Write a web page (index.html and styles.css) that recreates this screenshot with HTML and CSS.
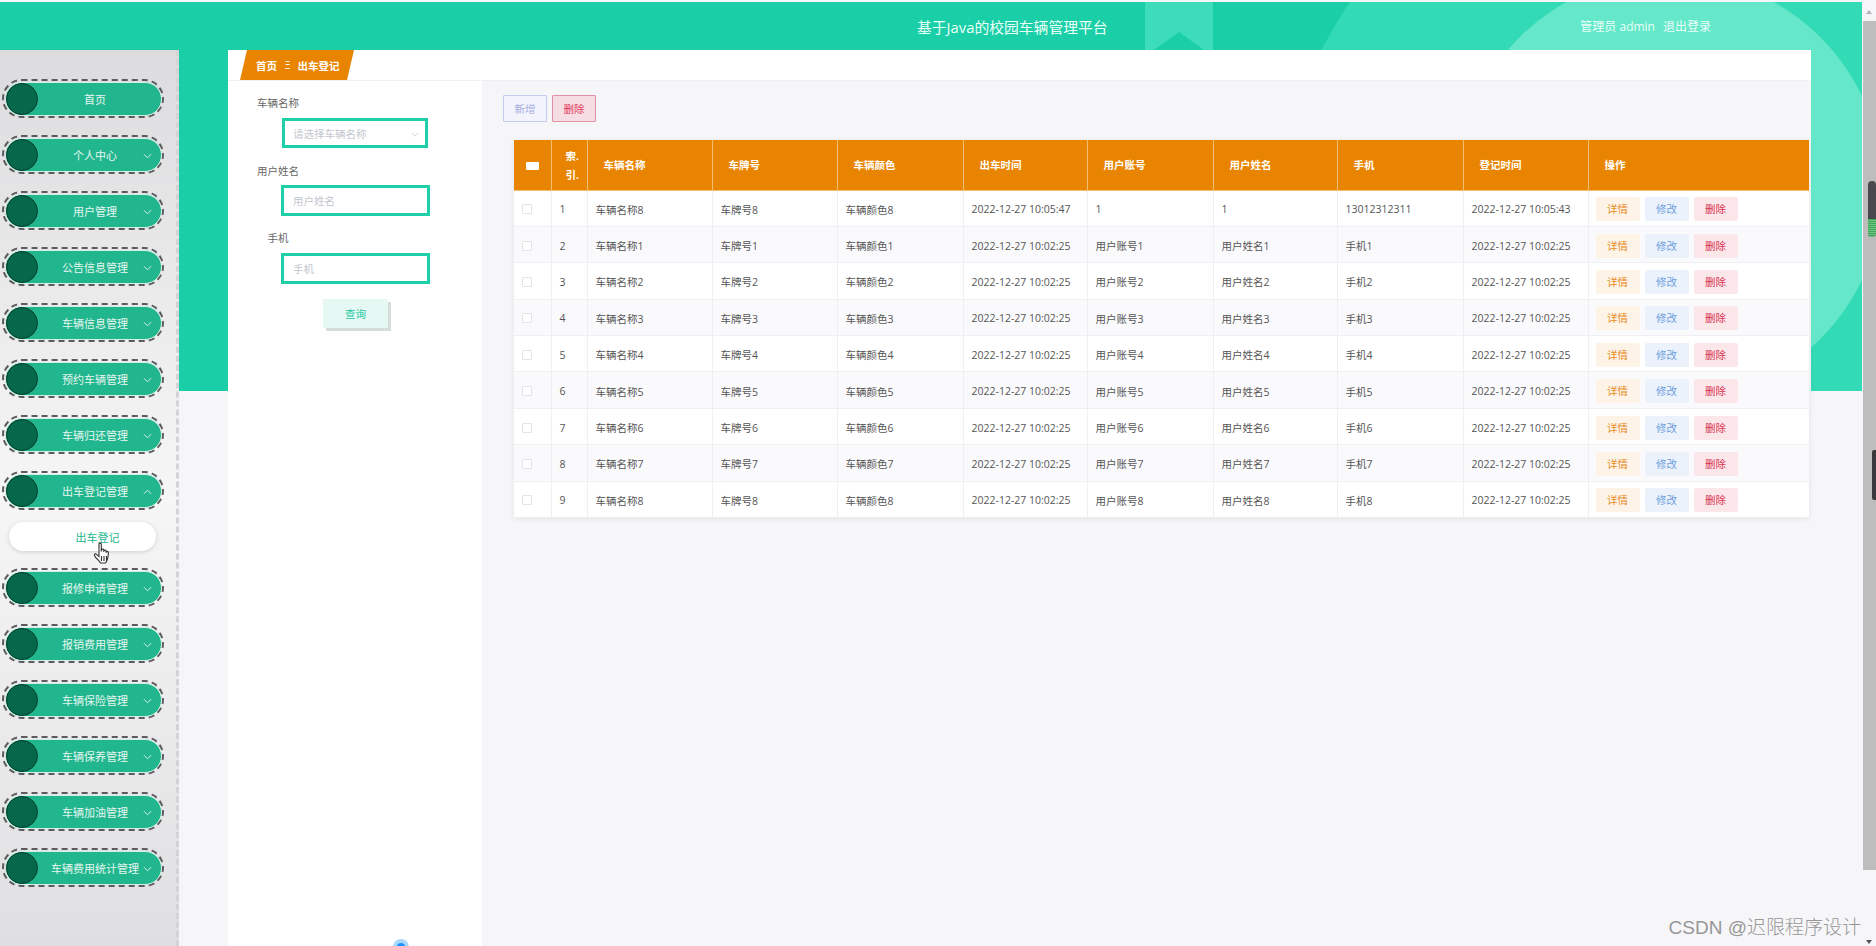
FILE: index.html
```html
<!DOCTYPE html>
<html lang="zh">
<head>
<meta charset="utf-8">
<title>基于Java的校园车辆管理平台</title>
<link rel="stylesheet" href="styles.css">
</head>
<body>
<div class="page">
  <div class="hero">
    <div class="hero-wide"></div>
    <div class="hero-stripe"><span class="hero-tri"></span></div>
    <div class="hero-disc"></div>
  </div>

  <header class="header">
    <div class="title">基于Java的校园车辆管理平台</div>
    <div class="user"><span>管理员 admin</span><span>退出登录</span></div>
  </header>

  <div class="body">
    <aside class="sidebar">
      <nav class="menu">
        <div class="item"><div class="pill"><span class="dot"></span><span class="label">首页</span></div></div>
        <div class="item"><div class="pill"><span class="dot"></span><span class="label">个人中心</span><svg class="chev" viewBox="0 0 10 6"><path d="M1 1l4 4 4-4"/></svg></div></div>
        <div class="item"><div class="pill"><span class="dot"></span><span class="label">用户管理</span><svg class="chev" viewBox="0 0 10 6"><path d="M1 1l4 4 4-4"/></svg></div></div>
        <div class="item"><div class="pill"><span class="dot"></span><span class="label">公告信息管理</span><svg class="chev" viewBox="0 0 10 6"><path d="M1 1l4 4 4-4"/></svg></div></div>
        <div class="item"><div class="pill"><span class="dot"></span><span class="label">车辆信息管理</span><svg class="chev" viewBox="0 0 10 6"><path d="M1 1l4 4 4-4"/></svg></div></div>
        <div class="item"><div class="pill"><span class="dot"></span><span class="label">预约车辆管理</span><svg class="chev" viewBox="0 0 10 6"><path d="M1 1l4 4 4-4"/></svg></div></div>
        <div class="item"><div class="pill"><span class="dot"></span><span class="label">车辆归还管理</span><svg class="chev" viewBox="0 0 10 6"><path d="M1 1l4 4 4-4"/></svg></div></div>
        <div class="group">
          <div class="item"><div class="pill"><span class="dot"></span><span class="label">出车登记管理</span><svg class="chev" viewBox="0 0 10 6"><path d="M1 5l4-4 4 4"/></svg></div></div>
          <div class="sub">出车登记
            <svg class="cursor" viewBox="0 0 18 24"><path d="M5.500 2.200c0-1.500 2.300-1.500 2.300 0v7.300l.3-1.700c.3-1.300 2.300-1 2.200.4l-.1 1.500.4-1c.5-1.100 2.200-.7 2.100.6l-.2 1.300.4-.6c.6-.9 2.100-.4 2 .8-.1 3-.4 5.300-1.300 7.300-.6 1.400-1.500 2.900-1.500 2.900H7s-1-1.600-2.600-3.300C3 16.600 1.500 14.700 1 13.500c-.5-1.300 1-2.200 2-1.200l2.500 2.300z"/><path d="M8 14v5M10.500 14v5M13 14v5"/></svg>
          </div>
        </div>
        <div class="item"><div class="pill"><span class="dot"></span><span class="label">报修申请管理</span><svg class="chev" viewBox="0 0 10 6"><path d="M1 1l4 4 4-4"/></svg></div></div>
        <div class="item"><div class="pill"><span class="dot"></span><span class="label">报销费用管理</span><svg class="chev" viewBox="0 0 10 6"><path d="M1 1l4 4 4-4"/></svg></div></div>
        <div class="item"><div class="pill"><span class="dot"></span><span class="label">车辆保险管理</span><svg class="chev" viewBox="0 0 10 6"><path d="M1 1l4 4 4-4"/></svg></div></div>
        <div class="item"><div class="pill"><span class="dot"></span><span class="label">车辆保养管理</span><svg class="chev" viewBox="0 0 10 6"><path d="M1 1l4 4 4-4"/></svg></div></div>
        <div class="item"><div class="pill"><span class="dot"></span><span class="label">车辆加油管理</span><svg class="chev" viewBox="0 0 10 6"><path d="M1 1l4 4 4-4"/></svg></div></div>
        <div class="item"><div class="pill"><span class="dot"></span><span class="label">车辆费用统计管理</span><svg class="chev" viewBox="0 0 10 6"><path d="M1 1l4 4 4-4"/></svg></div></div>
      </nav>
    </aside>

    <main class="main">
      <div class="crumbbar">
        <div class="crumb"><b>首页</b><i>Ξ</i><b>出车登记</b></div>
      </div>
      <div class="content">
        <section class="filter">
          <div class="field field-a">
            <label class="flabel">车辆名称</label>
            <div class="fselect"><span>请选择车辆名称</span><svg class="fchev" viewBox="0 0 10 6"><path d="M1 1l4 4 4-4"/></svg></div>
          </div>
          <div class="field field-b">
            <label class="flabel">用户姓名</label>
            <input class="finput" placeholder="用户姓名">
          </div>
          <div class="field field-c">
            <label class="flabel">手机</label>
            <input class="finput" placeholder="手机">
          </div>
          <button class="query">查询</button>
        </section>

        <section class="list">
          <div class="actions">
            <button class="btn btn-add">新增</button>
            <button class="btn btn-del">删除</button>
          </div>
          <table class="grid">
            <colgroup>
              <col class="c-a"><col class="c-b"><col class="c-c"><col class="c-c"><col class="c-d"><col class="c-e"><col class="c-d"><col class="c-e"><col class="c-d"><col class="c-c"><col>
            </colgroup>
            <thead>
              <tr>
                <th class="th-check"><span class="hcheck"></span></th>
                <th class="th-idx">索.<br>引.</th>
                <th>车辆名称</th><th>车牌号</th><th>车辆颜色</th><th>出车时间</th><th>用户账号</th><th>用户姓名</th><th>手机</th><th>登记时间</th><th>操作</th>
              </tr>
            </thead>
            <tbody>
              <tr><td class="td-check"><span class="check"></span></td><td>1</td><td>车辆名称8</td><td>车牌号8</td><td>车辆颜色8</td><td>2022-12-27 10:05:47</td><td>1</td><td>1</td><td>13012312311</td><td>2022-12-27 10:05:43</td><td class="ops"><span class="op op-a">详情</span><span class="op op-b">修改</span><span class="op op-c">删除</span></td></tr>
              <tr><td class="td-check"><span class="check"></span></td><td>2</td><td>车辆名称1</td><td>车牌号1</td><td>车辆颜色1</td><td>2022-12-27 10:02:25</td><td>用户账号1</td><td>用户姓名1</td><td>手机1</td><td>2022-12-27 10:02:25</td><td class="ops"><span class="op op-a">详情</span><span class="op op-b">修改</span><span class="op op-c">删除</span></td></tr>
              <tr><td class="td-check"><span class="check"></span></td><td>3</td><td>车辆名称2</td><td>车牌号2</td><td>车辆颜色2</td><td>2022-12-27 10:02:25</td><td>用户账号2</td><td>用户姓名2</td><td>手机2</td><td>2022-12-27 10:02:25</td><td class="ops"><span class="op op-a">详情</span><span class="op op-b">修改</span><span class="op op-c">删除</span></td></tr>
              <tr><td class="td-check"><span class="check"></span></td><td>4</td><td>车辆名称3</td><td>车牌号3</td><td>车辆颜色3</td><td>2022-12-27 10:02:25</td><td>用户账号3</td><td>用户姓名3</td><td>手机3</td><td>2022-12-27 10:02:25</td><td class="ops"><span class="op op-a">详情</span><span class="op op-b">修改</span><span class="op op-c">删除</span></td></tr>
              <tr><td class="td-check"><span class="check"></span></td><td>5</td><td>车辆名称4</td><td>车牌号4</td><td>车辆颜色4</td><td>2022-12-27 10:02:25</td><td>用户账号4</td><td>用户姓名4</td><td>手机4</td><td>2022-12-27 10:02:25</td><td class="ops"><span class="op op-a">详情</span><span class="op op-b">修改</span><span class="op op-c">删除</span></td></tr>
              <tr><td class="td-check"><span class="check"></span></td><td>6</td><td>车辆名称5</td><td>车牌号5</td><td>车辆颜色5</td><td>2022-12-27 10:02:25</td><td>用户账号5</td><td>用户姓名5</td><td>手机5</td><td>2022-12-27 10:02:25</td><td class="ops"><span class="op op-a">详情</span><span class="op op-b">修改</span><span class="op op-c">删除</span></td></tr>
              <tr><td class="td-check"><span class="check"></span></td><td>7</td><td>车辆名称6</td><td>车牌号6</td><td>车辆颜色6</td><td>2022-12-27 10:02:25</td><td>用户账号6</td><td>用户姓名6</td><td>手机6</td><td>2022-12-27 10:02:25</td><td class="ops"><span class="op op-a">详情</span><span class="op op-b">修改</span><span class="op op-c">删除</span></td></tr>
              <tr><td class="td-check"><span class="check"></span></td><td>8</td><td>车辆名称7</td><td>车牌号7</td><td>车辆颜色7</td><td>2022-12-27 10:02:25</td><td>用户账号7</td><td>用户姓名7</td><td>手机7</td><td>2022-12-27 10:02:25</td><td class="ops"><span class="op op-a">详情</span><span class="op op-b">修改</span><span class="op op-c">删除</span></td></tr>
              <tr><td class="td-check"><span class="check"></span></td><td>9</td><td>车辆名称8</td><td>车牌号8</td><td>车辆颜色8</td><td>2022-12-27 10:02:25</td><td>用户账号8</td><td>用户姓名8</td><td>手机8</td><td>2022-12-27 10:02:25</td><td class="ops"><span class="op op-a">详情</span><span class="op op-b">修改</span><span class="op op-c">删除</span></td></tr>
            </tbody>
          </table>
        </section>
      </div>
    </main>
  </div>

  <div class="scrollbar">
    <span class="arrow arrow-up"></span>
    <div class="track">
      <span class="thumb"><span class="thumb-green"></span></span>
      <span class="thumb2"></span>
    </div>
    <span class="arrow arrow-down"></span>
  </div>

  <span class="bluedot"></span>
  <div class="watermark">CSDN @迟限程序设计</div>
</div>
</body>
</html>
```
FILE: styles.css
```css
* { box-sizing: border-box; }
html, body { margin: 0; padding: 0; height: 100%; overflow: hidden; }
body {
  background: #f6f6f9;
  font-family: "Open Sans", "Noto Sans CJK SC", sans-serif;
  font-size: 10.5px;
  color: #555;
}
.page {
  position: relative;
  width: 1876px;
  height: 946px;
  overflow: hidden;
  background: #f6f6f9;
  padding-top: 2px;
}
.hero {
  position: absolute;
  left: 0;
  top: 2px;
  width: 1862px;
  height: 389px;
  background: #1acfa7;
  overflow: hidden;
}
.hero-wide {
  position: absolute;
  left: 1260px;
  top: -242px;
  width: 1080px;
  height: 1080px;
  border-radius: 50%;
  background: #33dab6;
}
.hero-stripe {
  position: absolute;
  left: 1145px;
  top: 0;
  width: 68px;
  height: 48px;
  background: #3ddcbb;
  overflow: hidden;
}
.hero-tri {
  position: absolute;
  left: 9px;
  top: 30px;
  width: 0;
  height: 0;
  border-left: 25px solid transparent;
  border-right: 25px solid transparent;
  border-bottom: 18px solid #1acfa7;
}
.hero-disc {
  position: absolute;
  left: 1457px;
  top: -27px;
  width: 426px;
  height: 426px;
  border-radius: 50%;
  background: #65e8ca;
}

.header {
  position: relative;
  height: 48px;
  display: flex;
  align-items: center;
  padding-left: 917px;
  padding-right: 165px;
  color: #eafff9;
}
.title { font-size: 14.8px; }
.user { margin-left: auto; display: flex; gap: 8px; font-size: 12px; }

.body { position: relative; display: flex; height: 896px; }

.sidebar {
  width: 179px;
  flex: none;
  background: linear-gradient(180deg, #dcdbdd 0%, #f6f6f7 50%, #dfdfe1 100%);
  border-right: 3px dashed #d4d4d6;
  padding: 29px 0 0 2px;
}
.menu { display: flex; flex-direction: column; gap: 17px; }
.group { display: flex; flex-direction: column; gap: 12px; }
.item {
  width: 162px;
  height: 39px;
  border: 2px dashed #5c5c5c;
  border-radius: 20px;
  padding: 0.5px 1px 0.5px 1px;
}
.pill {
  position: relative;
  height: 34px;
  width: 157px;
  border-radius: 17px;
  background: #22b68e;
  border: 1px solid #d3eee4;
  display: flex;
  align-items: center;
  justify-content: center;
  padding-left: 23px;
  color: #e6f6f0;
  font-size: 11px;
}
.dot {
  position: absolute;
  left: 0;
  top: 0;
  width: 32px;
  height: 32px;
  border-radius: 50%;
  background: #05684a;
  border: 1px solid #063d2c;
}
.label { position: relative; white-space: nowrap; }
.chev {
  position: absolute;
  right: 9px;
  top: 14px;
  width: 9px;
  height: 6px;
  fill: none;
  stroke: #e6f6f0;
  stroke-width: 1;
}
.sub {
  position: relative;
  margin-left: 7px;
  width: 147px;
  height: 29px;
  border-radius: 15px;
  background: #fff;
  box-shadow: 0 1px 4px rgba(0, 0, 0, 0.15);
  color: #22b68e;
  font-size: 11px;
  display: flex;
  align-items: center;
  justify-content: center;
  padding-left: 30px;
}
.cursor {
  position: absolute;
  left: 84px;
  top: 20px;
  width: 19px;
  height: 24px;
  fill: #fff;
  stroke: #333;
  stroke-width: 1.1;
}

.main {
  margin-left: 49px;
  width: 1583px;
  display: flex;
  flex-direction: column;
  flex: none;
}
.crumbbar {
  height: 31px;
  background: #fff;
  border-bottom: 1px solid #f0f0f2;
  padding-left: 12px;
  flex: none;
}
.crumb {
  width: 114px;
  height: 30px;
  background: #e98400;
  clip-path: polygon(7px 0, 100% 0, 107px 100%, 0 100%);
  color: #fff;
  display: flex;
  align-items: center;
  padding-left: 16px;
  font-size: 10.5px;
}
.crumb b { font-weight: 700; }
.crumb i { font-style: normal; margin: 0 7px 0 8px; font-weight: 400; font-size: 10px; }

.content { display: flex; flex: 1; min-height: 0; }
.filter {
  width: 254px;
  flex: none;
  background: #fff;
  padding-top: 14px;
  display: flex;
  flex-direction: column;
}
.field { display: flex; flex-direction: column; }
.flabel {
  width: 100px;
  text-align: center;
  line-height: 16px;
  color: #666;
  font-size: 10.5px;
}
.field-a { margin-bottom: 15px; }
.field-b { margin-bottom: 14px; }
.field-c { margin-bottom: 15px; }
.fselect, .finput {
  border: 3px solid #1dd0a8;
  background: #fff;
  font: inherit;
  font-size: 10.5px;
  outline: none;
  border-radius: 0;
}
.fselect {
  margin: 7px 0 0 54px;
  width: 146px;
  height: 30px;
  display: flex;
  align-items: center;
  justify-content: space-between;
  padding: 0 6px 0 8px;
  color: #c3c6cf;
}
.fchev { width: 8px; height: 5px; fill: none; stroke: #c3c6cf; stroke-width: 1; margin-top: 3px; }
.finput {
  margin: 6px 0 0 53px;
  width: 149px;
  height: 31px;
  padding: 0 0 0 9px;
  color: #555;
}
.field-c .finput { margin-top: 7px; }
.finput::placeholder { color: #c3c6cf; opacity: 1; }
.query {
  margin-left: 95px;
  width: 65px;
  height: 29px;
  border: 0;
  background: #e6f8f4;
  color: #1dc8a2;
  box-shadow: 3px 3px 0 #d6dcda;
  font: inherit;
  font-size: 10.5px;
  padding: 0;
}

.list { flex: 1; background: #f6f6f9; padding: 14px 2px 0 21px; min-width: 0; }
.actions { display: flex; gap: 5px; height: 27px; }
.btn {
  width: 44px;
  height: 27px;
  font: inherit;
  font-size: 10.5px;
  padding: 0;
  border-radius: 1px;
  border-style: solid;
  border-width: 1px;
}
.btn-add { background: #f2f3fb; border-color: #c5cbf0; color: #a7ade3; }
.btn-del { background: #f6dde3; border-color: #e190a5; color: #e03a5d; }

.grid {
  margin: 18px 0 0 11px;
  width: 1295px;
  table-layout: fixed;
  border-collapse: collapse;
  background: #fff;
  box-shadow: 0 1px 6px rgba(0, 0, 0, 0.08);
}
.c-a { width: 37px; }
.c-b { width: 36px; }
.c-c { width: 125px; }
.c-d { width: 126px; }
.c-e { width: 124px; }
.grid th {
  height: 50px;
  background: #e98400;
  color: #fff;
  font-weight: 700;
  text-align: left;
  padding: 2px 0 0 16px;
  border: 1px solid #f0be74;
  border-top: 0;
  font-size: 10.5px;
  line-height: 19px;
}
.grid th:last-child, .grid th:first-child { border-left: 0; border-right: 0; }
.grid .th-check { padding: 2px 0 0 12px; }
.grid .th-idx { padding: 2px 0 0 14px; }
.hcheck { display: block; width: 13px; height: 8px; background: #fff; border-radius: 1px; }
.grid td {
  height: 36.4px;
  padding: 2px 0 0 8px;
  border: 1px solid #f0f0f3;
  color: #555;
  white-space: nowrap;
}
.grid tbody tr:nth-child(even) td { background: #fafafc; }
.grid td:first-child { border-left: 0; }
.grid td:last-child { border-right: 0; }
.check {
  display: block;
  width: 10px;
  height: 10px;
  border: 1px solid #e4e4e8;
  background: #fff;
  border-radius: 1px;
}
.ops { font-size: 0; }
.grid .ops { padding-left: 7px; }
.op {
  display: inline-block;
  width: 44px;
  height: 24px;
  line-height: 24px;
  text-align: center;
  font-size: 10.5px;
  margin-right: 5px;
  border-radius: 2px;
  vertical-align: middle;
}
.op-a { background: #fdf3e6; color: #e98a1c; }
.op-b { background: #ebf2fb; color: #6c9ee0; }
.op-c { background: #fbe6ea; color: #d8344f; }

.scrollbar {
  position: absolute;
  right: 0;
  top: 2px;
  width: 14px;
  height: 944px;
  background: #f6f6f9;
  display: flex;
  flex-direction: column;
  padding-top: 19px;
}
.track { position: relative; width: 13px; margin-left: 1px; height: 849px; background: #bdbdbd; }
.thumb {
  position: absolute;
  left: 5px;
  top: 160px;
  width: 8px;
  height: 56px;
  border-radius: 4px;
  background: #4a4a4e;
  overflow: hidden;
}
.thumb-green {
  position: absolute;
  left: 0;
  right: 0;
  bottom: 0;
  height: 18px;
  background: repeating-linear-gradient(180deg, #3fa65a 0 1px, #6fc583 1px 2px);
}
.thumb2 {
  position: absolute;
  left: 9px;
  top: 429px;
  width: 4px;
  height: 50px;
  border-radius: 2px 0 0 2px;
  background: #3a3a3c;
}
.arrow { position: absolute; left: 4px; width: 0; height: 0; border-left: 3px solid transparent; border-right: 3px solid transparent; }
.arrow-up { top: 8px; border-bottom: 4px solid #b5b5b5; }
.arrow-down { bottom: 2px; border-top: 4px solid #555; }

.bluedot {
  position: absolute;
  left: 393px;
  top: 939px;
  width: 16px;
  height: 16px;
  border-radius: 50%;
  background: #1e90ff;
  border: 4px solid #a9d8ff;
}
.watermark {
  position: absolute;
  right: 15px;
  top: 914px;
  font-family: "Liberation Sans", "Noto Sans CJK SC", sans-serif;
  font-weight: 300;
  font-size: 19px;
  line-height: 28px;
  color: #969696;
  white-space: nowrap;
}
```
